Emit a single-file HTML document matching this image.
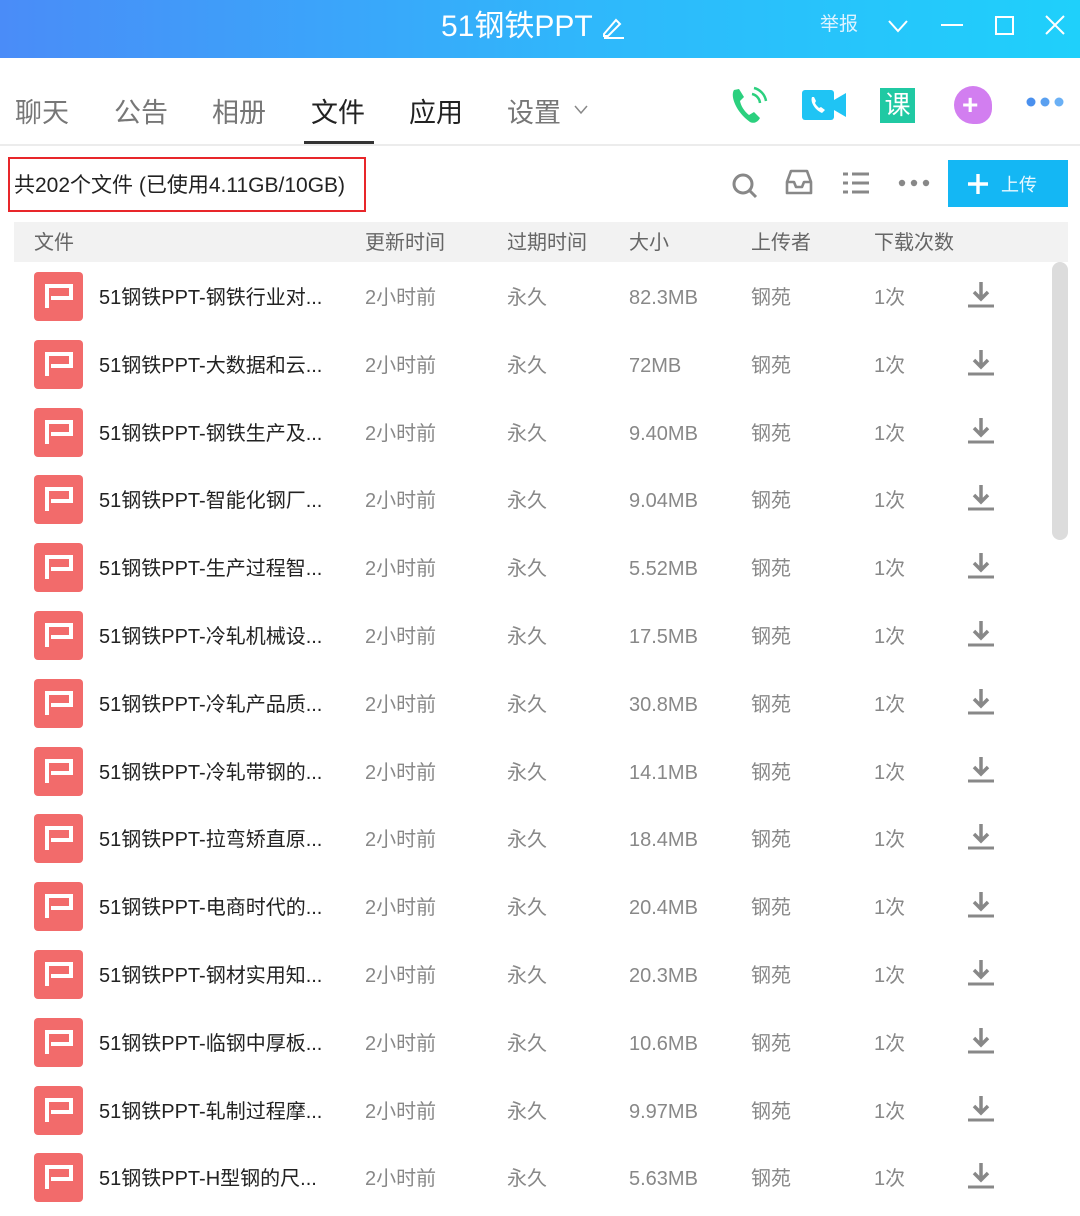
<!DOCTYPE html>
<html><head><meta charset="utf-8"><style>
*{margin:0;padding:0;box-sizing:border-box}
body{width:1080px;height:1216px;overflow:hidden;background:#fff;font-family:"Liberation Sans","Noto Sans CJK SC",sans-serif;position:relative}
.a{position:absolute;white-space:nowrap;line-height:1.2}
.title{left:0;top:0;width:1080px;height:58px;background:linear-gradient(90deg,#4a8cf8,#2fb8fb 55%,#1fd0fb)}
.tab{top:97px;font-size:27px;color:#777;line-height:32px}
.hdr{left:14px;top:222px;width:1054px;height:40px;background:#f2f2f2}
.h{top:231px;font-size:20px;color:#666;line-height:24px}
.c{font-size:20px;color:#888;line-height:24px}
.icon{left:34px;width:49px;height:49px;background:#f26b6b;border-radius:4px}
</style></head><body>
<div class="a title"></div>
<div class="a" style="left:441px;top:9px;font-size:30px;color:#fff;line-height:36px">51钢铁PPT</div>
<svg class="a" style="left:600px;top:14px" width="26" height="26" viewBox="0 0 26 26"><path d="M4 20 L16 6 L20 10 L8 22 L4 22 Z M4 24 H24" stroke="#fff" stroke-width="2" fill="none"/></svg>
<div class="a" style="left:820px;top:13px;font-size:19px;color:#dff3ff;line-height:24px">举报</div>
<svg class="a" style="left:886px;top:16px" width="24" height="20"><path d="M3 5 L12 15 L21 5" stroke="#fff" stroke-width="2" fill="none"/></svg>
<div class="a" style="left:941px;top:24px;width:22px;height:2px;background:#fff"></div>
<div class="a" style="left:995px;top:16px;width:19px;height:19px;border:2px solid #fff"></div>
<svg class="a" style="left:1044px;top:14px" width="22" height="22"><path d="M2 2 L20 20 M20 2 L2 20" stroke="#fff" stroke-width="2"/></svg>

<div class="a tab" style="left:15px">聊天</div>
<div class="a tab" style="left:114px">公告</div>
<div class="a tab" style="left:212px">相册</div>
<div class="a tab" style="left:311px;color:#222">文件</div>
<div class="a" style="left:304px;top:141px;width:70px;height:3px;background:#333"></div>
<div class="a tab" style="left:409px;color:#222">应用</div>
<div class="a tab" style="left:507px">设置</div>
<svg class="a" style="left:573px;top:104px" width="16" height="12"><path d="M2 2 L8 9 L14 2" stroke="#888" stroke-width="1.5" fill="none"/></svg>
<div class="a" style="left:0;top:144px;width:1080px;height:2px;background:#ececec"></div>

<svg class="a" style="left:728px;top:86px" width="42" height="40" viewBox="0 0 42 40"><path d="M6 4 C2 10 8 26 22 36 C26 38 30 36 32 32 L26 26 L21 29 C16 25 13 20 12 15 L16 11 L11 3 Z" fill="#2bd07e"/><path d="M24 8 A10 10 0 0 1 32 17 M26 2 A16 16 0 0 1 38 15" stroke="#2bd07e" stroke-width="2.5" fill="none"/></svg>
<svg class="a" style="left:802px;top:88px" width="44" height="34"><rect x="0" y="2" width="32" height="30" rx="3" fill="#1fc4f4"/><path d="M32 12 L44 5 V29 L32 22 Z" fill="#1fc4f4"/><path d="M10 9 C8 14 13 22 20 25 L23 22 L19 19 L17 20 C15 18 14 17 13 15 L14 13 L12 9Z" fill="#fff"/></svg>
<div class="a" style="left:880px;top:88px;width:35px;height:35px;background:#20c9a3;color:#fff;font-size:26px;text-align:center;line-height:35px">课</div>
<div class="a" style="left:954px;top:86px;width:38px;height:38px;border-radius:50% 50% 40% 50%;background:#d27ef0"></div>
<div class="a" style="left:962px;top:91px;color:#fff;font-size:28px;line-height:28px;font-weight:bold">+</div>
<svg class="a" style="left:1026px;top:96px" width="40" height="12"><circle cx="5" cy="6" r="4.5" fill="#4a90ee"/><circle cx="19" cy="6" r="4.5" fill="#5aa0f0"/><circle cx="33" cy="6" r="4.5" fill="#6ab0f5"/></svg>

<div class="a" style="left:8px;top:157px;width:358px;height:55px;border:2px solid #e8262a"></div>
<div class="a" style="left:14px;top:173px;font-size:21px;color:#222;line-height:26px">共202个文件 (已使用4.11GB/10GB)</div>
<svg class="a" style="left:731px;top:172px" width="28" height="28"><circle cx="12" cy="12" r="9" stroke="#888" stroke-width="3" fill="none"/><path d="M18 18 L25 25" stroke="#888" stroke-width="3"/></svg>
<svg class="a" style="left:784px;top:168px" width="30" height="30"><path d="M3 14 L7 3 H23 L27 14 V25 H3 Z M3 14 H10 L12 19 H18 L20 14 H27" stroke="#888" stroke-width="2.6" fill="none" stroke-linejoin="round"/></svg>
<svg class="a" style="left:842px;top:170px" width="28" height="26"><path d="M1 4 H6 M10 4 H27 M1 13 H6 M10 13 H27 M1 22 H6 M10 22 H27" stroke="#888" stroke-width="3"/></svg>
<svg class="a" style="left:898px;top:178px" width="32" height="10"><circle cx="4" cy="5" r="3.2" fill="#888"/><circle cx="16" cy="5" r="3.2" fill="#888"/><circle cx="28" cy="5" r="3.2" fill="#888"/></svg>
<div class="a" style="left:948px;top:160px;width:120px;height:47px;background:#14b7f4"></div>
<svg class="a" style="left:967px;top:173px" width="22" height="22"><path d="M11 1 V21 M1 11 H21" stroke="#fff" stroke-width="3.4"/></svg>
<div class="a" style="left:1001px;top:173px;font-size:18px;color:#e8f8ff;line-height:24px">上传</div>

<div class="a hdr"></div>
<div class="a h" style="left:34px">文件</div>
<div class="a h" style="left:365px">更新时间</div>
<div class="a h" style="left:507px">过期时间</div>
<div class="a h" style="left:629px">大小</div>
<div class="a h" style="left:751px">上传者</div>
<div class="a h" style="left:874px">下载次数</div>
<div class="a" style="left:1052px;top:262px;width:16px;height:278px;background:#dcdcdc;border-radius:8px"></div>

<div id="rows"></div>
<script>
var n=["钢铁行业对...","大数据和云...","钢铁生产及...","智能化钢厂...","生产过程智...","冷轧机械设...","冷轧产品质...","冷轧带钢的...","拉弯矫直原...","电商时代的...","钢材实用知...","临钢中厚板...","轧制过程摩...","H型钢的尺..."];
var s=["82.3MB","72MB","9.40MB","9.04MB","5.52MB","17.5MB","30.8MB","14.1MB","18.4MB","20.4MB","20.3MB","10.6MB","9.97MB","5.63MB"];
var h="";
for(var i=0;i<14;i++){var y=262+i*67.8;var t=y+24;
h+='<div class="a icon" style="top:'+(y+10)+'px"></div><svg class="a" style="left:45px;top:'+(y+22)+'px" width="28" height="26"><path d="M2 24 V2 H26 V14 H6" stroke="#fff" stroke-width="4" fill="none"/></svg>';
h+='<div class="a" style="left:99px;top:'+t+'px;font-size:20px;color:#222;line-height:24px">51钢铁PPT-'+n[i]+'</div>';
h+='<div class="a c" style="left:365px;top:'+t+'px">2小时前</div><div class="a c" style="left:507px;top:'+t+'px">永久</div><div class="a c" style="left:629px;top:'+t+'px">'+s[i]+'</div><div class="a c" style="left:751px;top:'+t+'px">钢苑</div><div class="a c" style="left:874px;top:'+t+'px">1次</div>';
h+='<svg class="a" style="left:966px;top:'+(y+18)+'px" width="30" height="30"><path d="M15 2 V18 M8 12 L15 19 L22 12" stroke="#888" stroke-width="3.5" fill="none"/><path d="M2 26 H28" stroke="#888" stroke-width="3"/></svg>';}
document.getElementById("rows").innerHTML=h;
</script>
</body></html>
